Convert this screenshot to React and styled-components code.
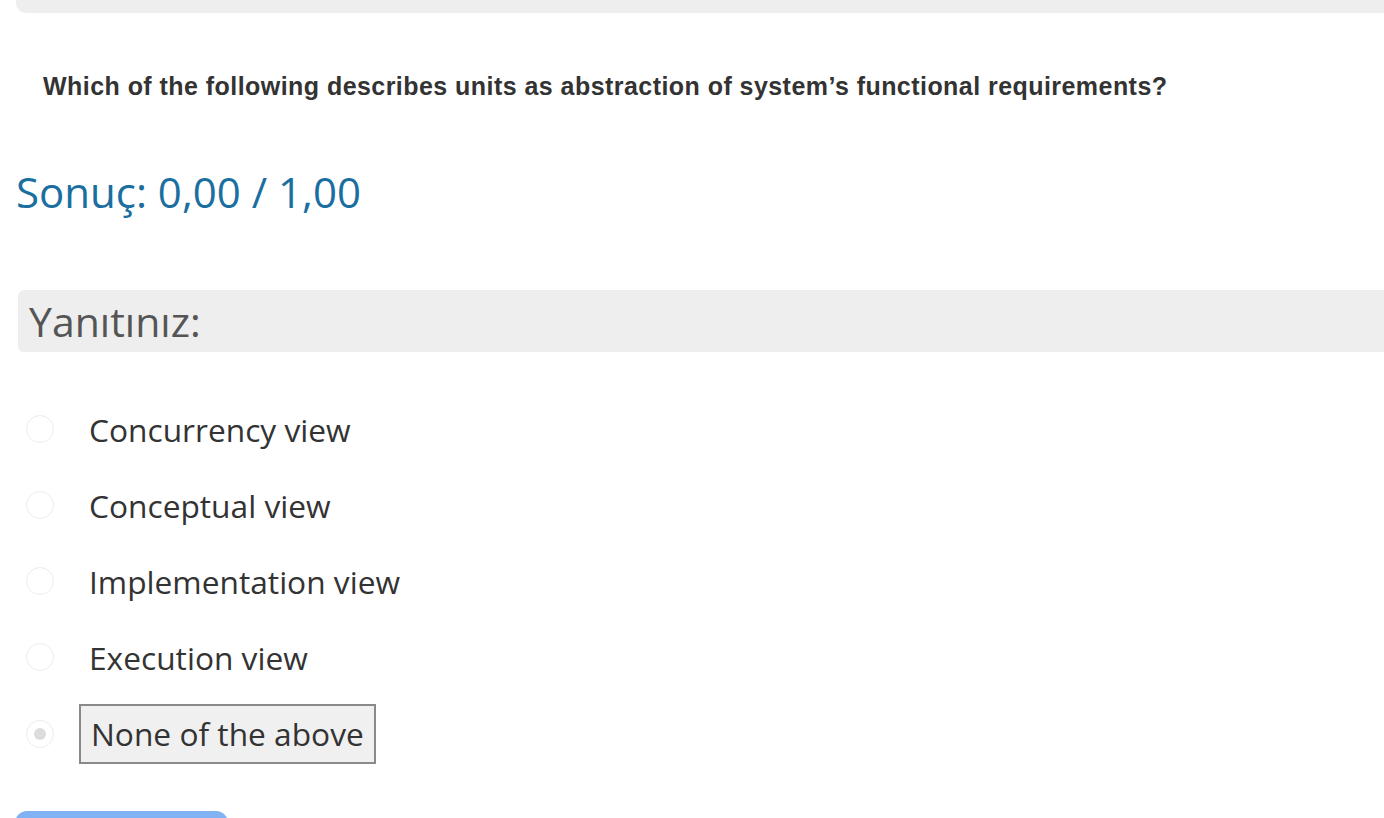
import React from 'react';
import styled, { createGlobalStyle } from 'styled-components';

const GlobalStyle = createGlobalStyle`
  html, body {
    margin: 0;
    padding: 0;
    background: #fff;
    overflow: hidden;
  }
  body {
    font-family: "Open Sans", "Noto Sans", sans-serif;
    color: #333;
  }
`;

const Page = styled.div`
  width: 1384px;
  height: 818px;
  overflow: hidden;
`;

const TopBar = styled.div`
  margin-left: 16px;
  height: 13px;
  background: #eee;
  border-bottom-left-radius: 10px;
`;

const Question = styled.div`
  margin: 59px 0 0 43px;
  font-family: "Liberation Sans", Arial, sans-serif;
  font-weight: bold;
  font-size: 25px;
  letter-spacing: 0.45px;
  line-height: 28px;
  color: #333;
`;

const Grade = styled.div`
  margin: 64px 0 0 16px;
  font-size: 42px;
  line-height: 56px;
  color: #1b6ea0;
`;

const AnswerHead = styled.div`
  margin: 70px 0 0 18px;
  height: 62px;
  padding-left: 11px;
  display: flex;
  align-items: center;
  background: #eee;
  border-radius: 6px 0 0 6px;
  font-size: 41px;
  color: #555;
`;

const Options = styled.div`
  margin-top: 48px;
  display: flex;
  flex-direction: column;
  gap: 18px;
`;

const Option = styled.div`
  display: flex;
  align-items: center;
  height: ${(p) => (p.$checked ? '60px' : '58px')};
  padding-left: 26px;
`;

const Radio = styled.span`
  width: 26px;
  height: 26px;
  border-radius: 50%;
  border: 1px solid #ececec;
  display: flex;
  align-items: center;
  justify-content: center;
  flex-shrink: 0;

  &::after {
    content: '';
    width: 12px;
    height: 12px;
    border-radius: 50%;
    background: ${(p) => (p.$checked ? '#dcdcdc' : 'transparent')};
  }
`;

const Label = styled.span`
  margin-left: ${(p) => (p.$checked ? '25px' : '35px')};
  font-size: 31.7px;
  color: #333;
  ${(p) =>
    p.$checked &&
    `
    border: 2px solid #8a8a8a;
    background: #f0f0f0;
    padding: 7px 10px;
    line-height: 42px;
  `}
`;

const SubmitButton = styled.div`
  margin: 47px 0 0 15px;
  width: 213px;
  height: 40px;
  background: #80b2f4;
  border-radius: 12px;
`;

const options = [
  'Concurrency view',
  'Conceptual view',
  'Implementation view',
  'Execution view',
  'None of the above',
];

export default function App() {
  return (
    <Page>
      <GlobalStyle />
      <TopBar />
      <Question>
        Which of the following describes units as abstraction of system’s functional requirements?
      </Question>
      <Grade>Sonuç: 0,00 / 1,00</Grade>
      <AnswerHead>Yanıtınız:</AnswerHead>
      <Options>
        {options.map((o, i) => {
          const checked = i === options.length - 1;
          return (
            <Option key={o} $checked={checked}>
              <Radio $checked={checked} />
              <Label $checked={checked}>{o}</Label>
            </Option>
          );
        })}
      </Options>
      <SubmitButton />
    </Page>
  );
}
